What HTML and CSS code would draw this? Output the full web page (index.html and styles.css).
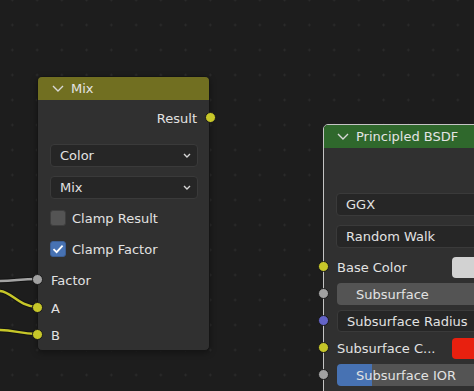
FILE: index.html
```html
<!DOCTYPE html>
<html lang="en">
<head>
    <meta charset="UTF-8">
    <meta name="viewport" content="width=device-width, initial-scale=1.0">
    <title>Shader Nodes</title>
    <link rel="stylesheet" href="styles.css">
</head>
<body>
    <div class="editor">
        <!-- links coming in from the left -->
        <svg class="wires" width="474" height="391" viewBox="0 0 474 391">
            <path class="wire-shadow" d="M0 281 C 15 281, 20 279, 37 279"/>
            <path class="wire-float" d="M0 281 C 15 281, 20 279, 37 279"/>
            <path class="wire-shadow" d="M0 291 C 12 292, 18 306, 37 307"/>
            <path class="wire-color" d="M0 291 C 12 292, 18 306, 37 307"/>
            <path class="wire-shadow" d="M0 330 C 15 330, 20 334, 37 334"/>
            <path class="wire-color" d="M0 330 C 15 330, 20 334, 37 334"/>
        </svg>

        <div class="node node-mix">
            <div class="node-header header-mix">
                <svg class="collapse" width="12" height="7" viewBox="0 0 12 7"><path d="M1 1 L6 6 L11 1"/></svg>
                <span>Mix</span>
            </div>
            <div class="node-body">
                <div class="row row-output">
                    <span>Result</span>
                    <i class="socket socket-color socket-out"></i>
                </div>
                <div class="select select-first">
                    <span>Color</span>
                    <svg class="caret" width="8" height="5" viewBox="0 0 8 5"><path d="M1 1 L4 4 L7 1"/></svg>
                </div>
                <div class="select select-next">
                    <span>Mix</span>
                    <svg class="caret" width="8" height="5" viewBox="0 0 8 5"><path d="M1 1 L4 4 L7 1"/></svg>
                </div>
                <div class="check check-result">
                    <span class="box"></span>
                    <span>Clamp Result</span>
                </div>
                <div class="check check-factor">
                    <span class="box box-on">
                        <svg width="16" height="16" viewBox="0 0 16 16"><path d="M3.5 8.2 L6.6 11.2 L12.6 4.6"/></svg>
                    </span>
                    <span>Clamp Factor</span>
                </div>
                <div class="row row-input row-factor">
                    <i class="socket socket-float socket-in"></i>
                    <span>Factor</span>
                </div>
                <div class="row row-input row-a">
                    <i class="socket socket-color socket-in"></i>
                    <span>A</span>
                </div>
                <div class="row row-input row-b">
                    <i class="socket socket-color socket-in"></i>
                    <span>B</span>
                </div>
            </div>
        </div>

        <div class="node node-bsdf">
            <div class="node-header header-shader">
                <svg class="collapse" width="12" height="7" viewBox="0 0 12 7"><path d="M1 1 L6 6 L11 1"/></svg>
                <span>Principled BSDF</span>
            </div>
            <div class="node-body">
                <div class="select select-ggx"><span>GGX</span></div>
                <div class="select select-next"><span>Random Walk</span></div>
                <div class="row prop prop-base">
                    <i class="socket socket-color socket-in"></i>
                    <span class="prop-label">Base Color</span>
                    <span class="swatch swatch-white"></span>
                </div>
                <div class="row prop prop-gap">
                    <i class="socket socket-float socket-in"></i>
                    <div class="slider"><span>Subsurface</span></div>
                </div>
                <div class="row prop prop-gap">
                    <i class="socket socket-vector socket-in"></i>
                    <div class="field"><span>Subsurface Radius</span></div>
                </div>
                <div class="row prop prop-gap">
                    <i class="socket socket-color socket-in"></i>
                    <span class="prop-label">Subsurface C...</span>
                    <span class="swatch swatch-red"></span>
                </div>
                <div class="row prop prop-gap">
                    <i class="socket socket-float socket-in"></i>
                    <div class="slider slider-ior"><span>Subsurface IOR</span></div>
                </div>
            </div>
        </div>
    </div>
</body>
</html>
```

FILE: styles.css
```css
html, body {
    margin: 0;
    padding: 0;
}
body {
    font-family: "DejaVu Sans", sans-serif;
    font-size: 13px;
    color: #e2e2e2;
    background-color: #1d1d1d;
}
.editor {
    position: relative;
    width: 474px;
    height: 391px;
    overflow: hidden;
    background-color: #1d1d1d;
    background-image: radial-gradient(circle, #2c2c2c 0.9px, transparent 1.4px);
    background-size: 24.76px 25px;
    background-position: 0 -12.5px;
}
.wires {
    position: absolute;
    left: 0;
    top: 0;
}
.wires path {
    fill: none;
}
.wire-shadow {
    stroke: #141414;
    stroke-width: 4.5;
}
.wire-float {
    stroke: #a3a3a3;
    stroke-width: 2.4;
}
.wire-color {
    stroke: #c7c729;
    stroke-width: 2.4;
}

/* nodes */
.node {
    position: absolute;
    box-sizing: border-box;
    background-color: #303030;
    border-radius: 5px;
}
.node-mix {
    left: 37px;
    top: 76px;
    width: 173px;
    height: 275px;
    border: 1px solid #151515;
    box-shadow: 0 2px 6px rgba(0,0,0,0.35);
}
.node-bsdf {
    left: 323px;
    top: 124px;
    width: 240px;
    height: 300px;
    border: 1px solid #c4c4c4;
}
.node-header {
    height: 23px;
    display: flex;
    align-items: center;
    border-radius: 4px 4px 0 0;
    color: #e4e4e4;
}
.header-mix {
    background-color: #716f21;
    padding-left: 14px;
}
.header-shader {
    background-color: #2f682c;
    padding-left: 13px;
}
.collapse {
    margin-right: 7px;
}
.collapse path {
    fill: none;
    stroke: #d8d8d8;
    stroke-width: 1.4;
}
.node-body {
    display: flex;
    flex-direction: column;
}

/* rows */
.row {
    position: relative;
    height: 22px;
    display: flex;
    align-items: center;
}
.row-output {
    margin-top: 7px;
    justify-content: flex-end;
    padding-right: 12px;
}
.row-input {
    padding-left: 13px;
}
.row-factor {
    margin-top: 9px;
}
.row-a {
    margin-top: 6px;
}
.row-b {
    margin-top: 5px;
}
.socket {
    position: absolute;
    width: 9px;
    height: 9px;
    border-radius: 50%;
    border: 1px solid #1a1a1a;
    top: 5px;
}
.socket-out {
    right: -6.5px;
}
.socket-in {
    left: -6.5px;
}
.socket-color {
    background-color: #c7c729;
}
.socket-float {
    background-color: #a1a1a1;
}
.socket-vector {
    background-color: #6363c7;
}

/* dropdowns */
.select {
    height: 23px;
    box-sizing: border-box;
    display: flex;
    align-items: center;
    justify-content: space-between;
    margin: 0 11px 0 12px;
    padding: 0 6px 0 9px;
    background-color: #262626;
    border: 1px solid #3a3a3a;
    border-radius: 4px;
}
.select-first {
    margin-top: 15px;
}
.select-next {
    margin-top: 9px;
}
.select-ggx {
    margin-top: 45px;
}
.caret path {
    fill: none;
    stroke: #d6d6d6;
    stroke-width: 1.4;
}

/* checkboxes */
.check {
    height: 22px;
    display: flex;
    align-items: center;
    padding-left: 12px;
    margin-top: 8px;
}
.check-factor {
    margin-top: 9px;
}
.box {
    width: 16px;
    height: 16px;
    box-sizing: border-box;
    margin-right: 6px;
    border-radius: 3px;
    background-color: #545454;
    border: 1px solid #3e3e3e;
}
.box-on {
    background-color: #4772b3;
    border-color: #3c5f96;
}
.box-on svg {
    display: block;
    margin: -1px;
}
.box-on path {
    fill: none;
    stroke: #ffffff;
    stroke-width: 1.8;
}

/* principled properties */
.prop {
    padding-left: 13px;
}
.prop-base {
    margin-top: 8px;
}
.prop-gap {
    margin-top: 5px;
}
.prop-label {
    width: 115px;
    white-space: nowrap;
}
.swatch {
    flex: 1;
    height: 21px;
    margin-right: 12px;
    border-radius: 4px;
}
.swatch-white {
    background-color: #d2d2d2;
}
.swatch-red {
    background-color: #e8200f;
}
.slider, .field {
    flex: 1;
    height: 22px;
    display: flex;
    align-items: center;
    margin-right: 12px;
    border-radius: 4px;
    box-sizing: border-box;
}
.slider {
    padding-left: 19px;
    background-color: #545454;
}
.slider-ior {
    background: linear-gradient(to right, #4772b3 35px, #545454 35px);
}
.field {
    padding-left: 9px;
    background-color: #262626;
    border: 1px solid #3a3a3a;
}
```
